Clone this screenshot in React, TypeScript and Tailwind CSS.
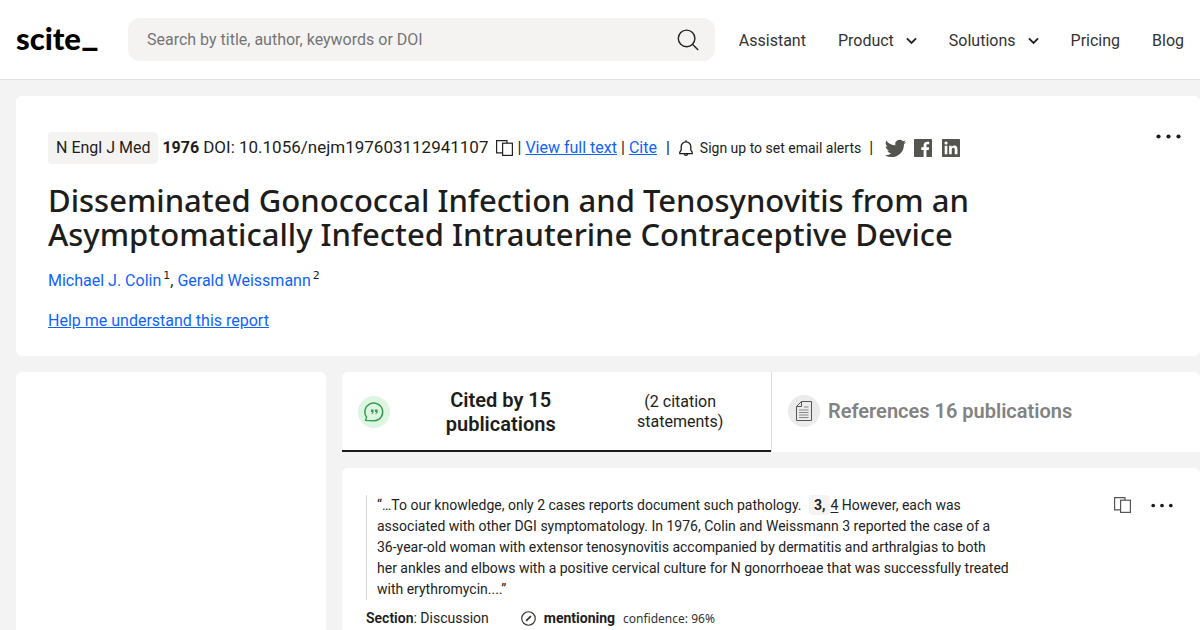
import React from "react";

const Chevron = () => (
  <svg width="11" height="8" viewBox="0 0 12 8" fill="none" stroke="#222" strokeWidth="2" aria-hidden="true">
    <path d="M1 1.2 6 6.2l5-5" />
  </svg>
);

const CopyIcon = ({ className }: { className: string }) => (
  <svg width="17" height="16" viewBox="0 0 17 16" fill="none" stroke="currentColor" className={className} aria-hidden="true">
    <path d="M6.5 12.9H.6V.6H11v2.6" strokeWidth="1.2" />
    <rect x="6.6" y="3.2" width="9.8" height="12.2" strokeWidth="1.2" />
  </svg>
);

const Dots = ({ width }: { width: number }) => (
  <svg width={width} height="5" viewBox="0 0 25 5" fill="#1d1d1b" aria-hidden="true">
    <circle cx="2.5" cy="2.5" r="2.1" />
    <circle cx="12.5" cy="2.5" r="2.1" />
    <circle cx="22.5" cy="2.5" r="2.1" />
  </svg>
);

const Header = () => (
  <header className="flex h-20 items-center border-b border-[#e0e0e0] bg-white px-4">
    <a href="#" className="flex w-[112px] shrink-0 items-start pb-1 font-[Lato] text-[31px] leading-8 font-black text-black">
      scite<span className="text-[38px] leading-4">_</span>
    </a>
    <form className="mr-6 flex h-[43px] min-w-0 flex-1 items-center rounded-xl bg-[#f4f3f2] pr-4 pl-[19px]">
      <input
        type="text"
        aria-label="Search"
        placeholder="Search by title, author, keywords or DOI"
        className="min-w-0 flex-1 bg-transparent text-base outline-none placeholder:text-[#757575]"
      />
      <button type="button" aria-label="Submit search">
        <svg width="22" height="22" viewBox="0 0 22 22" fill="none" stroke="#222" strokeWidth="1.4" aria-hidden="true">
          <circle cx="9.6" cy="9.4" r="8.3" />
          <path d="m15.4 15.2 5.8 5.8" />
        </svg>
      </button>
    </form>
    <nav className="flex shrink-0 items-center gap-8 pt-0.5 text-base text-[#333]">
      <a href="#">Assistant</a>
      <button className="flex items-center gap-3">
        Product <Chevron />
      </button>
      <button className="flex items-center gap-3">
        Solutions <Chevron />
      </button>
      <a href="#">Pricing</a>
      <a href="#">Blog</a>
    </nav>
  </header>
);

const PaperSummary = () => (
  <section className="flex items-start justify-between rounded-md bg-white pt-9 pr-[19px] pb-[23px] pl-8">
    <div className="min-w-0">
      <div className="flex h-8 items-center gap-1 text-base whitespace-nowrap">
        <span className="rounded bg-[#f4f3f2] px-2 py-1">N Engl J Med</span>
        <b className="font-bold">1976</b>
        <span className="text-[17px]">DOI: 10.1056/nejm197603112941107</span>
        <button aria-label="Copy DOI" className="ml-1">
          <CopyIcon className="text-[#222]" />
        </button>
        <span>|</span>
        <a href="#" className="text-[#0f62fe] underline">View full text</a>
        <span>|</span>
        <a href="#" className="text-[#0f62fe] underline">Cite</a>
        <span className="mx-[5px]">|</span>
        <button className="flex items-center gap-[7px] text-sm">
          <svg width="14" height="17" viewBox="0 0 14 17" fill="none" stroke="#1d1d1b" strokeWidth="1.3" aria-hidden="true">
            <path d="M.8 13.6h12.4v-1.4L11.8 10V6.6a4.8 4.8 0 0 0-9.6 0V10L.8 12.2zM7 1.8V.2M5.2 14a1.9 1.9 0 0 0 3.6 0" />
          </svg>
          Sign up to set email alerts
        </button>
        <span className="mx-1">|</span>
        <div className="flex items-center text-[#555550]">
          <a href="#" aria-label="Twitter">
            <svg width="28" height="28" viewBox="1 1 29 29" fill="currentColor" aria-hidden="true">
              <path d="M11.92 24.94A12.76 12.76 0 0 0 24.76 12.1v-.59A9.4 9.4 0 0 0 27 9.18a9.31 9.31 0 0 1-2.59.71 4.56 4.56 0 0 0 2-2.5 8.89 8.89 0 0 1-2.86 1.1 4.52 4.52 0 0 0-7.7 4.11 12.79 12.79 0 0 1-9.3-4.71 4.51 4.51 0 0 0 1.4 6 4.47 4.47 0 0 1-2-.56v.05A4.53 4.53 0 0 0 9.5 17.83a4.53 4.53 0 0 1-2 .08A4.51 4.51 0 0 0 11.68 21 9.05 9.05 0 0 1 6.07 23 9.77 9.77 0 0 1 5 22.91a12.77 12.77 0 0 0 6.92 2" />
            </svg>
          </a>
          <a href="#" aria-label="Facebook">
            <svg width="28" height="24" viewBox="0 0 32 32" fill="currentColor" aria-hidden="true">
              <path d="M27 4H5C4.400 4 4 4.400 4 5V27C4 27.600 4.400 28 5 28H16.820V18.720H13.700V15.090h3.120V12.420c0-3.100 1.890-4.790 4.670-4.790.93 0 1.860 0 2.790.14V11H22.370c-1.510 0-1.800.72-1.800 1.770v2.310h3.600l-.47 3.630H20.570V28H27C27.600 28 28 27.600 28 27V5C28 4.400 27.600 4 27 4Z" />
            </svg>
          </a>
          <a href="#" aria-label="LinkedIn">
            <svg width="28" height="24" viewBox="0 0 32 32" fill="currentColor" aria-hidden="true">
              <path d="M27 4H5C4.400 4 4 4.400 4 5v22c0 .600.400 1 1 1h22c.600 0 1-.400 1-1V5C28 4.400 27.600 4 27 4zM11.100 24.400H7.600V13h3.500v11.400zM9.400 11.400c-1.100 0-2.100-.9-2.100-2.100 0-1.200.9-2.100 2.100-2.100 1.100 0 2.100.9 2.100 2.100s-1 2.100-2.100 2.100zM24.500 24.300H21v-5.600c0-1.300 0-3.100-1.900-3.100-1.900 0-2.100 1.500-2.100 2.900v5.700h-3.500V13h3.300v1.500h.1c.5-.9 1.700-1.900 3.400-1.900 3.600 0 4.300 2.400 4.300 5.500v6.200z" />
            </svg>
          </a>
        </div>
      </div>
      <h1 className="mt-[19px] max-w-[960px] font-['Noto_Sans'] text-[31px] leading-[34px] font-medium">
        Disseminated Gonococcal Infection and Tenosynovitis from an Asymptomatically Infected Intrauterine Contraceptive Device
      </h1>
      <p className="mt-[18px] flex h-6 items-center text-base">
        <a href="#" className="text-[#0f62fe]">Michael J. Colin</a>
        <sup className="ml-0.5 font-['DejaVu_Sans'] text-[11px]">1</sup>
        <span className="mr-1">,</span>
        <a href="#" className="text-[#0f62fe]">Gerald Weissmann</a>
        <sup className="ml-0.5 font-['DejaVu_Sans'] text-[11px]">2</sup>
      </p>
      <p className="mt-4 leading-6">
        <a href="#" className="text-[#0f62fe] underline">Help me understand this report</a>
      </p>
    </div>
    <button aria-label="More options" className="flex pt-0.5">
      <Dots width={25} />
    </button>
  </section>
);

const Tabs = () => (
  <div role="tablist" className="grid h-20 grid-cols-2 overflow-hidden rounded-t-md bg-white">
    <button
      role="tab"
      aria-selected="true"
      className="grid grid-cols-[32px_4fr_3fr] items-center gap-2 border-b-2 border-[#1d1d1b] px-4 pt-0.5"
    >
      <svg width="32" height="32" viewBox="0 0 32 32" fill="none" aria-hidden="true">
        <circle cx="16" cy="16" r="16" fill="#def5e1" />
        <path d="M7.600 24.400l1-3.200A8.900 8.900 0 1 1 16.500 24.800z" stroke="#2f9e4c" strokeWidth="1.4" />
        <path d="M13 13.6h2.600v2.200c0 1.300-.7 2.100-2.100 2.500v-1.100c.5-.2.8-.6.8-1.100H13zM17 13.600h2.600v2.200c0 1.300-.7 2.100-2.100 2.500v-1.100c.5-.2.8-.6.8-1.100H17z" fill="#2f9e4c" />
      </svg>
      <span className="pl-1.5 text-xl leading-6 font-semibold">Cited by 15 publications</span>
      <span className="px-4 text-base leading-5">(2 citation statements)</span>
    </button>
    <button role="tab" aria-selected="false" className="flex items-center gap-2 border-l border-[#e0e0e0] px-4 pb-0.5 text-[#828282]">
      <svg width="32" height="32" viewBox="0 0 32 32" fill="none" className="shrink-0" aria-hidden="true">
        <circle cx="16" cy="16" r="16" fill="#ebebeb" />
        <path d="M13.5 6.5h10v19h-15v-14zM13.5 6.5v5h-5" stroke="#555" />
        <path d="M16 12h4.5M11 15h9.5M11 17.5h9.5M11 20h9.5M11 22.5h9.5" stroke="#888" />
      </svg>
      <span className="text-xl leading-6 font-semibold">References 16 publications</span>
    </button>
  </div>
);

const Citation = () => (
  <article className="rounded-md bg-white pt-[27px] pr-[27px] pb-6 pl-6">
    <div className="flex items-start justify-between">
      <blockquote className="max-w-[650px] border-l border-[#d8d8d8] pl-[10px] text-sm leading-[21px] text-[#222]">
        “…To our knowledge, only 2 cases reports document such pathology.{" "}
        <b className="ml-1 rounded bg-[#f4f3f2] px-[5px] py-0.5 font-bold">3,</b>
        <a href="#" className="underline underline-offset-2">4</a> However, each was associated with other DGI
        symptomatology. In 1976, Colin and Weissmann 3 reported the case of a{" "}
        <span className="whitespace-nowrap">36-year-old</span> woman with extensor tenosynovitis accompanied by
        dermatitis and arthralgias to both <span className="whitespace-nowrap">her ankles</span> and elbows with a
        positive cervical culture for N gonorrhoeae that was successfully treated with erythromycin....”
      </blockquote>
      <div className="flex h-5 items-center gap-5">
        <button aria-label="Copy citation">
          <CopyIcon className="text-[#555]" />
        </button>
        <button aria-label="Citation options" className="flex">
          <Dots width={22} />
        </button>
      </div>
    </div>
    <div className="mt-[7px] flex h-[21px] items-center text-sm">
      <span><b className="font-semibold">Section</b>: Discussion</span>
      <svg width="15" height="15" viewBox="0 0 14 14" fill="none" stroke="#333" className="mt-0.5 mr-2 ml-8" aria-hidden="true">
        <circle cx="7" cy="7" r="6.3" strokeWidth="1.1" />
        <path d="M4.8 9.2 9.2 4.8" strokeWidth="1.7" />
      </svg>
      <b className="mr-2 font-bold">mentioning</b>
      <span className="pt-0.5 font-['Noto_Sans'] text-xs text-[#333]">confidence: 96%</span>
    </div>
  </article>
);

export default function App() {
  return (
    <div className="min-h-screen bg-[#f3f3f3] font-[Roboto,sans-serif] text-[#1d1d1b]">
      <Header />
      <main className="pt-4 pl-4">
        <PaperSummary />
        <div className="mt-4 flex gap-4">
          <aside className="w-[310px] shrink-0 rounded-md bg-white" />
          <div className="min-w-0 flex-1">
            <Tabs />
            <div className="mt-4">
              <Citation />
            </div>
          </div>
        </div>
      </main>
    </div>
  );
}
